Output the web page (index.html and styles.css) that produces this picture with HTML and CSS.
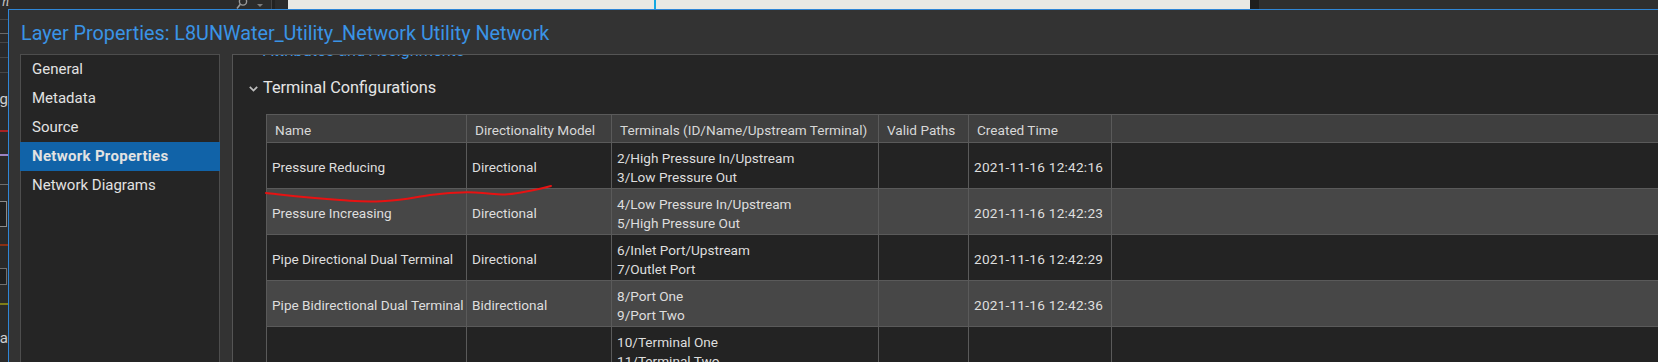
FILE: index.html
```html
<!DOCTYPE html>
<html>
<head>
  <meta charset="UTF-8">
  <title>Layer Properties</title>
  <link rel="stylesheet" href="styles.css">
</head>
<body>
  <div class="topbar">
    <div class="app-search">
      <span class="app-search-text">h</span>
      <svg class="search-icon" width="14" height="9" viewBox="0 0 14 9">
        <circle cx="8" cy="1.5" r="3.6" fill="none" stroke="#9a9a9a" stroke-width="1.4"/>
        <line x1="5.3" y1="4.3" x2="2" y2="8.5" stroke="#9a9a9a" stroke-width="1.6"/>
      </svg>
      <span class="search-caret"></span>
      <span class="search-sep"></span>
    </div>
    <div class="app-canvas"><span class="canvas-mark"></span></div>
    <div class="app-split"></div>
    <div class="app-right"></div>
  </div>

  <div class="main">
    <!-- bit of the application window behind the dialog -->
    <div class="app-strip">
      <div class="strip-line" style="margin-top: 10px"></div>
      <div class="strip-line light" style="margin-top: 13px"></div>
      <div class="strip-line" style="margin-top: 8px"></div>
      <div class="strip-line" style="margin-top: 14px"></div>
      <div class="strip-line" style="margin-top: 14px"></div>
      <div class="strip-text" style="margin-top: 16px"><span>ng</span></div>
      <div class="strip-swatch red" style="margin-top: 21px"></div>
      <div class="strip-swatch purple" style="margin-top: 22px"></div>
      <div class="strip-line grey" style="margin-top: 28px"></div>
      <div class="strip-box tall" style="margin-top: 16px"></div>
      <div class="strip-swatch brown" style="margin-top: 17px"></div>
      <div class="strip-box" style="margin-top: 22px"></div>
      <div class="strip-swatch olive" style="margin-top: 18px"></div>
      <div class="strip-text" style="margin-top: 23px"><span>a</span></div>
    </div>

    <div class="dialog">
      <div class="dialog-title">Layer Properties: L8UNWater_Utility_Network Utility Network</div>

      <div class="dialog-body">
        <ul class="nav">
          <li class="nav-item">General</li>
          <li class="nav-item">Metadata</li>
          <li class="nav-item">Source</li>
          <li class="nav-item active">Network Properties</li>
          <li class="nav-item">Network Diagrams</li>
        </ul>

        <div class="content">
          <div class="prev-section">Attributes and Assignments</div>

          <div class="section-head">
            <svg class="chevron" width="9" height="6" viewBox="0 0 9 6">
              <polyline points="0.8,0.8 4.5,4.6 8.2,0.8" fill="none" stroke="#bdbdbd" stroke-width="1.7"/>
            </svg>
            <span>Terminal Configurations</span>
          </div>

          <div class="grid">
            <div class="grid-row grid-head">
              <div class="cell">Name</div>
              <div class="cell">Directionality Model</div>
              <div class="cell">Terminals (ID/Name/Upstream Terminal)</div>
              <div class="cell">Valid Paths</div>
              <div class="cell">Created Time</div>
              <div class="cell filler"></div>
            </div>
            <div class="grid-row">
              <div class="cell">Pressure Reducing</div>
              <div class="cell">Directional</div>
              <div class="cell"><div>2/High Pressure In/Upstream</div><div>3/Low Pressure Out</div></div>
              <div class="cell"></div>
              <div class="cell date">2021-11-16 12:42:16</div>
              <div class="cell filler"></div>
            </div>
            <div class="grid-row alt">
              <div class="cell">Pressure Increasing</div>
              <div class="cell">Directional</div>
              <div class="cell"><div>4/Low Pressure In/Upstream</div><div>5/High Pressure Out</div></div>
              <div class="cell"></div>
              <div class="cell date">2021-11-16 12:42:23</div>
              <div class="cell filler"></div>
            </div>
            <div class="grid-row">
              <div class="cell">Pipe Directional Dual Terminal</div>
              <div class="cell">Directional</div>
              <div class="cell"><div>6/Inlet Port/Upstream</div><div>7/Outlet Port</div></div>
              <div class="cell"></div>
              <div class="cell date">2021-11-16 12:42:29</div>
              <div class="cell filler"></div>
            </div>
            <div class="grid-row alt">
              <div class="cell">Pipe Bidirectional Dual Terminal</div>
              <div class="cell">Bidirectional</div>
              <div class="cell"><div>8/Port One</div><div>9/Port Two</div></div>
              <div class="cell"></div>
              <div class="cell date">2021-11-16 12:42:36</div>
              <div class="cell filler"></div>
            </div>
            <div class="grid-row">
              <div class="cell"></div>
              <div class="cell"></div>
              <div class="cell"><div>10/Terminal One</div><div>11/Terminal Two</div></div>
              <div class="cell"></div>
              <div class="cell"></div>
              <div class="cell filler"></div>
            </div>
          </div>
        </div>
      </div>
    </div>
  </div>

  <!-- hand drawn red mark on the screenshot -->
  <svg class="scribble" width="1658" height="362" viewBox="0 0 1658 362">
    <path d="M266,193 C285,195 310,198 340,200 S365,202 385,201 S415,197 430,195 S460,192 475,192.5 S495,195 505,194.5 S535,190 551,186"
          fill="none" stroke="#e81212" stroke-width="2" stroke-linecap="round"/>
  </svg>
</body>
</html>
```

FILE: styles.css
```css
body {
  margin: 0;
  width: 1658px;
  height: 362px;
  overflow: hidden;
  background-color: #2b2b2b;
  font-family: Roboto, "Open Sans", sans-serif;
  display: flex;
  flex-direction: column;
  position: relative;
}

/* app window behind the dialog */
.topbar {
  height: 9px;
  display: flex;
  flex-shrink: 0;
}

.app-search {
  width: 288px;
  background-color: #2b2b2b;
  display: flex;
  align-items: flex-start;
  overflow: hidden;
}

.app-search-text {
  font-family: "Liberation Serif", serif;
  font-style: italic;
  font-size: 14px;
  line-height: 14px;
  color: #c8c8c8;
  margin-top: -5px;
  margin-left: 2px;
}

.search-icon {
  margin-left: 226px;
}

.search-caret {
  margin-left: 8px;
  margin-top: 4px;
  border-left: 3px solid transparent;
  border-right: 3px solid transparent;
  border-top: 3px solid #7c7c7c;
}

.search-sep {
  margin-left: 8px;
  width: 1px;
  height: 9px;
  background-color: #444;
  border-right: 3px solid #222;
}

.app-canvas {
  width: 962px;
  background-color: #e9e9e4;
  display: flex;
}

.canvas-mark {
  width: 2px;
  margin-left: 366px;
  background-color: #13a9e2;
}

.app-split {
  width: 9px;
  background-color: #1e1e1e;
}

.app-right {
  flex: 1;
  background-color: #2f2f2f;
}

.main {
  flex: 1;
  display: flex;
  min-height: 0;
}

.app-strip {
  width: 8px;
  flex-shrink: 0;
  background-color: #2a2a2a;
  display: flex;
  flex-direction: column;
  overflow: hidden;
}

.strip-line {
  height: 1px;
  background-color: #474747;
}

.strip-line.light {
  background-color: #6a6a6a;
}

.strip-line.grey {
  background-color: #6e6e6e;
}

.strip-swatch {
  height: 2px;
}

.strip-swatch.red { background-color: #a82222; }
.strip-swatch.purple { background-color: #9b82c2; }
.strip-swatch.brown { background-color: #8a2f14; }
.strip-swatch.olive { background-color: #7e7d18; }

.strip-box {
  height: 17px;
  box-sizing: border-box;
  border: 1px solid #707070;
  border-left: none;
  margin-right: 1px;
  background-color: #1f1f1f;
}

.strip-box.tall {
  height: 26px;
  border-color: #8a8a8a;
}

.strip-text {
  height: 20px;
  line-height: 20px;
  font-size: 15px;
  color: #cfcfcf;
  display: flex;
  justify-content: flex-end;
  white-space: nowrap;
}

/* dialog */
.dialog {
  flex: 1;
  min-width: 0;
  border-left: 1px solid #2f86d6;
  border-top: 1px solid #2f86d6;
  background-color: #333333;
  display: flex;
  flex-direction: column;
}

.dialog-title {
  color: #3a94e6;
  font-size: 19.8px;
  line-height: 25px;
  height: 25px;
  padding: 11px 0 0 12px;
  margin-bottom: 8px;
  white-space: nowrap;
}

.dialog-body {
  flex: 1;
  min-height: 0;
  display: flex;
  gap: 12px;
  padding-left: 11px;
}

.nav {
  width: 200px;
  flex-shrink: 0;
  box-sizing: border-box;
  margin: 0;
  padding: 0;
  list-style: none;
  background-color: #252525;
  border: 1px solid #4d4d4d;
  border-bottom: none;
}

.nav-item {
  height: 29px;
  line-height: 29px;
  padding-left: 11px;
  font-size: 15px;
  color: #e2e2e2;
  white-space: nowrap;
}

.nav-item.active {
  margin: 0 -1px;
  padding-left: 12px;
  background-color: #1163a8;
  font-weight: 700;
  letter-spacing: 0.3px;
}

.content {
  flex: 1;
  min-width: 0;
  background-color: #252525;
  border-top: 1px solid #555;
  border-left: 1px solid #555;
  overflow: hidden;
}

/* previous section, scrolled nearly out of view */
.prev-section {
  margin-top: -14px;
  padding-left: 30px;
  height: 20px;
  line-height: 20px;
  font-size: 16.3px;
  color: #3a94e6;
  white-space: nowrap;
}

.section-head {
  margin-top: 16px;
  height: 22px;
  line-height: 22px;
  padding-left: 16px;
  display: flex;
  align-items: center;
  gap: 5px;
  font-size: 16.3px;
  color: #e6e6e6;
}

.chevron {
  margin-top: 2px;
}

/* terminal configurations table */
.grid {
  margin-top: 15px;
  margin-left: 33px;
  border-top: 1px solid #5a5a5a;
  border-left: 1px solid #5a5a5a;
}

.grid-row {
  display: grid;
  grid-template-columns: 200px 145px 267px 90px 143px 1fr;
  height: 46px;
  box-sizing: border-box;
  border-bottom: 1px solid #5a5a5a;
  background-color: #232323;
}

.grid-row.alt {
  background-color: #474747;
}

.grid-head {
  height: 28px;
  background-color: #3f3f3f;
}

.cell {
  box-sizing: border-box;
  border-right: 1px solid #5a5a5a;
  padding: 4px 5px 0 5px;
  display: flex;
  flex-direction: column;
  justify-content: center;
  font-size: 13.6px;
  line-height: 19px;
  color: #dedede;
  white-space: nowrap;
  overflow: hidden;
}

.grid-head .cell {
  padding: 3px 8px 0 8px;
  color: #d8d8d8;
}

.cell.date {
  letter-spacing: 0.25px;
}

.cell.filler {
  border-right: none;
}

.scribble {
  position: absolute;
  top: 0;
  left: 0;
  pointer-events: none;
}
```
